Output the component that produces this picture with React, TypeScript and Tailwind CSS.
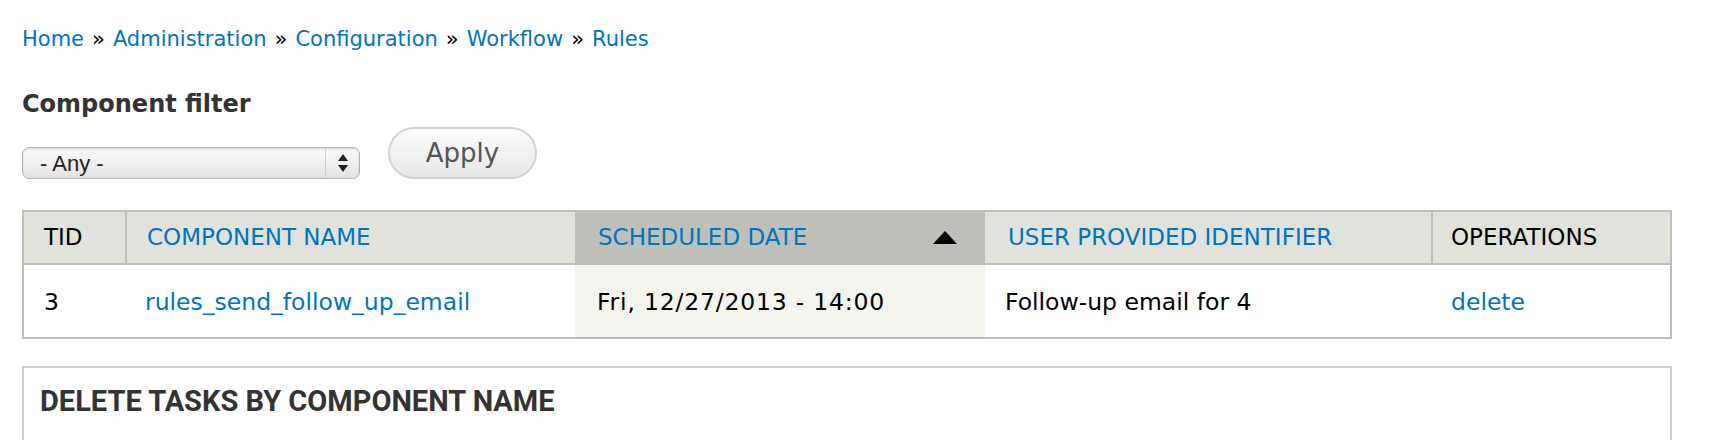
// Rules scheduler page

const crumbs = ["Home", "Administration", "Configuration", "Workflow", "Rules"];

const SortArrow = () => (
  <svg width="24" height="13" viewBox="0 0 24 13">
    <polygon points="12,0 24,13 0,13" fill="#000" />
  </svg>
);

const SelectArrows = () => (
  <svg width="10" height="18" viewBox="0 0 10 18">
    <polygon points="5,0 10,7 0,7" fill="#222" />
    <polygon points="0,11 10,11 5,18" fill="#222" />
  </svg>
);

const App = () => {
  return (
    <div className="min-h-[440px] bg-white pl-[22px] font-['DejaVu_Sans',sans-serif]">
      <div className="w-[1650px]">
        {/* breadcrumb */}
        <div className="mt-[27px] flex h-[26px] items-center text-[21px] text-[#0074bd]">
          {crumbs.map((c, i) => (
            <span key={c} className="flex items-center">
              {i > 0 && <span className="mx-[8px] text-[#000]">»</span>}
              <a href="#">{c}</a>
            </span>
          ))}
        </div>

        {/* filter form */}
        <h2 className="mt-[37px] h-[28px] text-[24px] leading-[28px] font-bold text-[#333]">
          Component filter
        </h2>
        <div className="mt-[9px] flex h-[52px] items-end gap-[28px]">
          <div className="flex h-[32px] w-[338px] items-center rounded-[7px] border border-[#b3b3b3] bg-gradient-to-b from-[#fafafa] via-[#f0f0f0] to-[#e2e2e2] shadow-[inset_0_1px_2px_rgba(0,0,0,0.15)]">
            <span className="flex-1 pl-[17px] font-['Liberation_Sans',sans-serif] text-[22px] text-[#222]">
              - Any -
            </span>
            <div className="flex h-full w-[34px] items-center justify-center border-l border-[#cfcfcf]">
              <SelectArrows />
            </div>
          </div>
          <button className="h-[52px] w-[149px] rounded-full border-2 border-[#d4d4d4] bg-gradient-to-b from-[#fdfdfd] to-[#e6e6e6] text-[26px] text-[#555]">
            Apply
          </button>
        </div>

        {/* table */}
        <div className="mt-[31px] border-2 border-[#bebfb9]">
          <div className="grid h-[53px] grid-cols-[101px_450px_410px_446px_1fr] border-b-2 border-[#bebfb9] bg-[#e1e2dc] text-[23px]">
            <div className="flex items-center pl-[20px] text-[#000]">TID</div>
            <div className="flex items-center border-l-2 border-[#bebfb9] pl-[20px] text-[#0074bd]">
              COMPONENT NAME
            </div>
            <div className="flex items-center justify-between bg-[#bebfb9] pr-[28px] pl-[23px] text-[#0074bd]">
              <span>SCHEDULED DATE</span>
              <SortArrow />
            </div>
            <div className="flex items-center border-l-2 border-[#e1e2dc] pl-[21px] text-[#0074bd]">
              USER PROVIDED IDENTIFIER
            </div>
            <div className="flex items-center border-l-2 border-[#bebfb9] pl-[18px] text-[#000]">
              OPERATIONS
            </div>
          </div>
          <div className="grid h-[72px] grid-cols-[101px_450px_410px_446px_1fr] text-[23.5px]">
            <div className="flex items-center pt-[3px] pl-[20px] text-[#000]">3</div>
            <div className="flex items-center pt-[3px] pl-[20px] text-[#0074bd]">
              <a href="#">rules_send_follow_up_email</a>
            </div>
            <div className="flex items-center bg-[#f3f4ee] pt-[3px] pl-[22px] tracking-[0.8px] text-[#000]">
              Fri, 12/27/2013 - 14:00
            </div>
            <div className="flex items-center pt-[3px] pl-[20px] text-[#000]">
              Follow-up email for 4
            </div>
            <div className="flex items-center pt-[3px] pl-[20px] text-[#0074bd]">
              <a href="#">delete</a>
            </div>
          </div>
        </div>

        {/* delete box */}
        <div className="mt-[27px] h-[120px] border-2 border-[#cccccc] pt-[16px] pl-[16px]">
          <h2 className="font-['Roboto',sans-serif] text-[29px] leading-[34px] font-bold text-[#333]">
            DELETE TASKS BY COMPONENT NAME
          </h2>
        </div>
      </div>
    </div>
  );
};

export default App;
